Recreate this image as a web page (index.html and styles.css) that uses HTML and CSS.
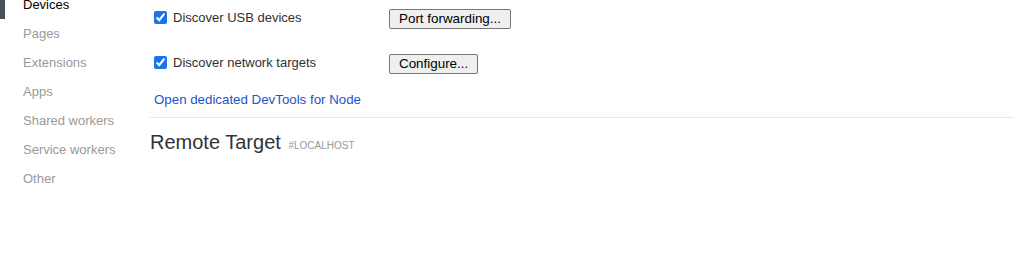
FILE: index.html
```html
<!DOCTYPE html>
<html>
<head>
<meta charset="utf-8">
<link rel="stylesheet" href="styles.css">
</head>
<body>
<div class="page">
  <nav class="sidebar">
    <div class="nav-item selected">Devices</div>
    <div class="nav-item">Pages</div>
    <div class="nav-item">Extensions</div>
    <div class="nav-item">Apps</div>
    <div class="nav-item">Shared workers</div>
    <div class="nav-item">Service workers</div>
    <div class="nav-item">Other</div>
  </nav>
  <main class="content">
    <div class="row">
      <label class="check"><input type="checkbox" checked> Discover USB devices</label>
      <button class="btn">Port forwarding...</button>
    </div>
    <div class="row">
      <label class="check"><input type="checkbox" checked> Discover network targets</label>
      <button class="btn">Configure...</button>
    </div>
    <a class="node-link" href="#">Open dedicated DevTools for Node</a>
    <hr class="sep">
    <h2 class="target-title">Remote Target <span class="target-sub">#LOCALHOST</span></h2>
  </main>
</div>
</body>
</html>
```
FILE: styles.css
```css
html, body {
  margin: 0;
  padding: 0;
  background: #fff;
  font-family: "Liberation Sans", Arial, sans-serif;
  font-size: 13px;
  color: #303030;
  overflow: hidden;
}
.page {
  display: flex;
  margin-top: -10px;
}
.sidebar {
  width: 150px;
  flex: none;
}
.nav-item {
  height: 29px;
  line-height: 29px;
  padding-left: 23px;
  color: #999;
  box-sizing: border-box;
}
.nav-item.selected {
  color: #000;
  border-left: 5px solid #4a5058;
  padding-left: 18px;
}
.content {
  flex: 1;
  padding-top: 10px;
}
.row {
  display: flex;
  align-items: center;
  height: 45px;
  margin-top: -5px;
}
.row + .row { margin-top: 0; }
.check {
  width: 239px;
  display: flex;
  align-items: center;
}
.check input {
  margin: 0 6px 0 4px;
  width: 13px;
  height: 13px;
  accent-color: #1a73e8;
}
.btn {
  font-family: inherit;
  font-size: 13.4px;
  height: 20px;
  padding: 0 9px;
  background: #efefef;
  border: 1px solid #767676;
  border-radius: 2px;
  color: #000;
  margin-top: 2px;
}
.node-link {
  display: block;
  margin: 5px 0 0 4px;
  color: #1a55c9;
  text-decoration: none;
  line-height: 20px;
  font-size: 13.3px;
}
.sep {
  border: 0;
  border-top: 1px solid #e8e8e8;
  margin: 7px 0 0 0;
}
.target-title {
  margin: 12px 0 0 0;
  font-size: 20px;
  font-weight: normal;
  color: #333;
  line-height: 24px;
}
.target-sub {
  font-size: 10px;
  color: #999;
  margin-left: 2px;
}
```
